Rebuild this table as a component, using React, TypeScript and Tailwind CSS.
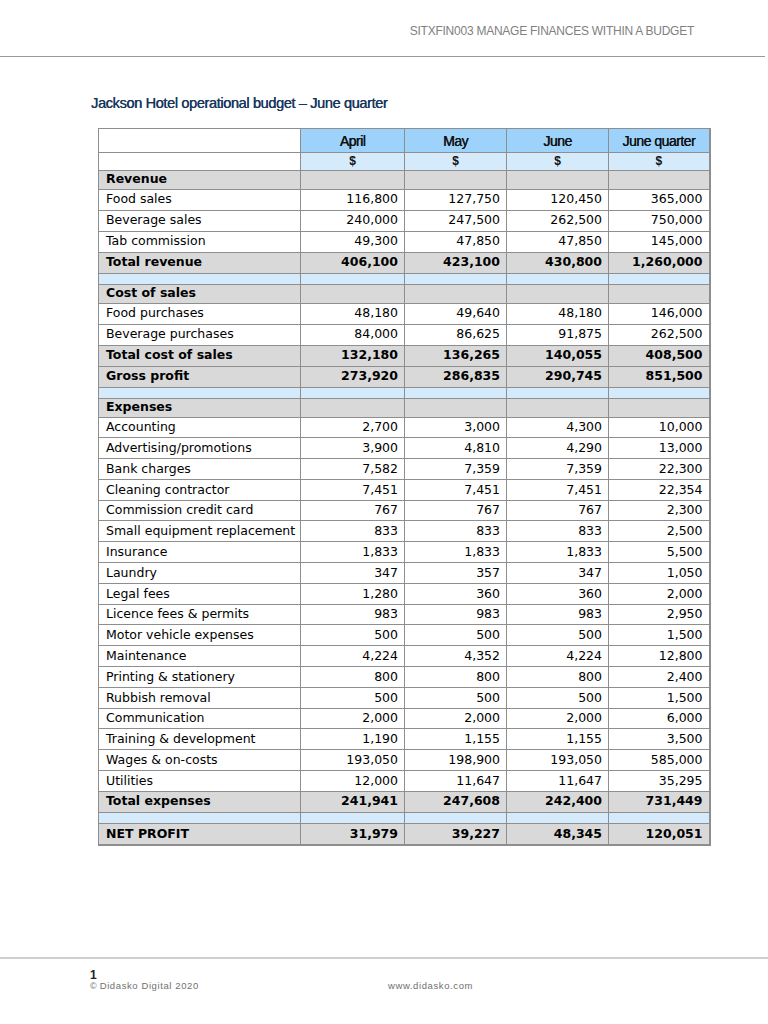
type Row = {
	label: string
	values?: string[]
	kind: 'item' | 'section' | 'total' | 'spacer'
}

const rows: Row[] = [
	{ label: 'Revenue', kind: 'section' },
	{ label: 'Food sales', values: ['116,800', '127,750', '120,450', '365,000'], kind: 'item' },
	{ label: 'Beverage sales', values: ['240,000', '247,500', '262,500', '750,000'], kind: 'item' },
	{ label: 'Tab commission', values: ['49,300', '47,850', '47,850', '145,000'], kind: 'item' },
	{ label: 'Total revenue', values: ['406,100', '423,100', '430,800', '1,260,000'], kind: 'total' },
	{ label: '', kind: 'spacer' },
	{ label: 'Cost of sales', kind: 'section' },
	{ label: 'Food purchases', values: ['48,180', '49,640', '48,180', '146,000'], kind: 'item' },
	{ label: 'Beverage purchases', values: ['84,000', '86,625', '91,875', '262,500'], kind: 'item' },
	{ label: 'Total cost of sales', values: ['132,180', '136,265', '140,055', '408,500'], kind: 'total' },
	{ label: 'Gross profit', values: ['273,920', '286,835', '290,745', '851,500'], kind: 'total' },
	{ label: '', kind: 'spacer' },
	{ label: 'Expenses', kind: 'section' },
	{ label: 'Accounting', values: ['2,700', '3,000', '4,300', '10,000'], kind: 'item' },
	{ label: 'Advertising/promotions', values: ['3,900', '4,810', '4,290', '13,000'], kind: 'item' },
	{ label: 'Bank charges', values: ['7,582', '7,359', '7,359', '22,300'], kind: 'item' },
	{ label: 'Cleaning contractor', values: ['7,451', '7,451', '7,451', '22,354'], kind: 'item' },
	{ label: 'Commission credit card', values: ['767', '767', '767', '2,300'], kind: 'item' },
	{ label: 'Small equipment replacement', values: ['833', '833', '833', '2,500'], kind: 'item' },
	{ label: 'Insurance', values: ['1,833', '1,833', '1,833', '5,500'], kind: 'item' },
	{ label: 'Laundry', values: ['347', '357', '347', '1,050'], kind: 'item' },
	{ label: 'Legal fees', values: ['1,280', '360', '360', '2,000'], kind: 'item' },
	{ label: 'Licence fees & permits', values: ['983', '983', '983', '2,950'], kind: 'item' },
	{ label: 'Motor vehicle expenses', values: ['500', '500', '500', '1,500'], kind: 'item' },
	{ label: 'Maintenance', values: ['4,224', '4,352', '4,224', '12,800'], kind: 'item' },
	{ label: 'Printing & stationery', values: ['800', '800', '800', '2,400'], kind: 'item' },
	{ label: 'Rubbish removal', values: ['500', '500', '500', '1,500'], kind: 'item' },
	{ label: 'Communication', values: ['2,000', '2,000', '2,000', '6,000'], kind: 'item' },
	{ label: 'Training & development', values: ['1,190', '1,155', '1,155', '3,500'], kind: 'item' },
	{ label: 'Wages & on-costs', values: ['193,050', '198,900', '193,050', '585,000'], kind: 'item' },
	{ label: 'Utilities', values: ['12,000', '11,647', '11,647', '35,295'], kind: 'item' },
	{ label: 'Total expenses', values: ['241,941', '247,608', '242,400', '731,449'], kind: 'total' },
	{ label: '', kind: 'spacer' },
	{ label: 'NET PROFIT', values: ['31,979', '39,227', '48,345', '120,051'], kind: 'total' },
]

const months = ['April', 'May', 'June', 'June quarter']

function BudgetRow({ row, dense }: { row: Row; dense: boolean }) {
	const cell = 'border border-[#8e8e8e]'
	if (row.kind === 'spacer') {
		return (
			<tr className="h-[11px] bg-[#d5ebfc]">
				<td className={cell} />
				<td className={cell} />
				<td className={cell} />
				<td className={cell} />
				<td className={cell} />
			</tr>
		)
	}
	const bg = row.kind === 'item' ? 'bg-white' : 'bg-[#d9d9d9]'
	const weight = row.kind === 'item' ? 'font-normal' : 'font-bold'
	let height = 'h-[21px]'
	if (row.label === 'NET PROFIT') height = 'h-[22px]'
	else if (row.kind === 'section') height = 'h-[19px]'
	else if (dense) height = 'h-[20.8px]'
	return (
		<tr className={`${bg} ${weight} ${height}`}>
			<td className={`${cell} text-left pl-[7px] whitespace-nowrap`}>{row.label}</td>
			{(row.values ?? ['', '', '', '']).map((v, i) => (
				<td key={i} className={`${cell} text-right pr-[6px]`}>
					{v}
				</td>
			))}
		</tr>
	)
}

export default function App() {
	return (
		<div className="w-[768px] h-[1024px] bg-white flex flex-col relative overflow-hidden">
			{/* Running header */}
			<header className="h-[57px] border-b border-[#9a9a9a] mr-[3px] flex items-start justify-end pr-[71px] pt-[25px]">
				<span className="text-[12px] leading-none text-[#808080] font-['Liberation_Sans',Arial,sans-serif] tracking-[-0.25px]">
					SITXFIN003 MANAGE FINANCES WITHIN A BUDGET
				</span>
			</header>

			<h1 className="ml-[91px] mt-[39px] text-[14.5px] leading-none text-[#17365d] font-['Liberation_Sans',Arial,sans-serif] tracking-[-0.35px] [text-shadow:0.35px_0_0_#17365d]">
				Jackson Hotel operational budget – June quarter
			</h1>

			<div className="ml-[98px] mt-[17px] w-[611px]">
				<table className="table-fixed border-collapse w-[611px] border-r-2 border-b-2 border-[#8e8e8e] font-['DejaVu_Sans',Verdana,sans-serif] text-[12.5px] leading-none text-black">
					<colgroup>
						<col className="w-[202px]" />
						<col className="w-[104px]" />
						<col className="w-[102px]" />
						<col className="w-[102px]" />
						<col className="w-[101px]" />
					</colgroup>
					<thead>
						<tr className="h-[24px]">
							<th className="border border-[#8e8e8e] bg-white" />
							{months.map((m) => (
								<th
									key={m}
									className="border border-[#8e8e8e] bg-[#9dd3fb] font-['Liberation_Sans',Arial,sans-serif] text-[14px] font-normal tracking-[-0.5px] text-[#111] [text-shadow:0.4px_0_0_#111] pt-[1px]"
								>
									{m}
								</th>
							))}
						</tr>
						<tr className="h-[18px]">
							<th className="border border-[#8e8e8e] bg-white" />
							{months.map((m) => (
								<th
									key={m}
									className="border border-[#8e8e8e] bg-[#d5ebfc] font-['Liberation_Sans',Arial,sans-serif] text-[12px] font-bold text-[#111]"
								>
									$
								</th>
							))}
						</tr>
					</thead>
					<tbody>
						{rows.map((r, i) => (
							<BudgetRow key={i} row={r} dense={i >= 13} />
						))}
					</tbody>
				</table>
			</div>

			<div className="flex-1" />

			{/* Footer */}
			<footer className="h-[67px] border-t-2 border-[#cfcfcf] flex items-start pt-[11px] pl-[90px] font-['Liberation_Sans',Arial,sans-serif] text-[#707070]">
				<div className="flex items-end w-[298px]">
					<div className="flex flex-col items-center">
						<span className="text-[12px] text-[#222] font-bold leading-[11px]">1</span>
						<span className="text-[9px] leading-[9px] mt-[1px]">©</span>
					</div>
					<span className="ml-[3px] text-[9.5px] tracking-[0.6px] leading-[10px]">Didasko Digital 2020</span>
				</div>
				<span className="mt-[11px] text-[9.5px] tracking-[0.6px] leading-[10px]">www.didasko.com</span>
			</footer>
		</div>
	)
}
